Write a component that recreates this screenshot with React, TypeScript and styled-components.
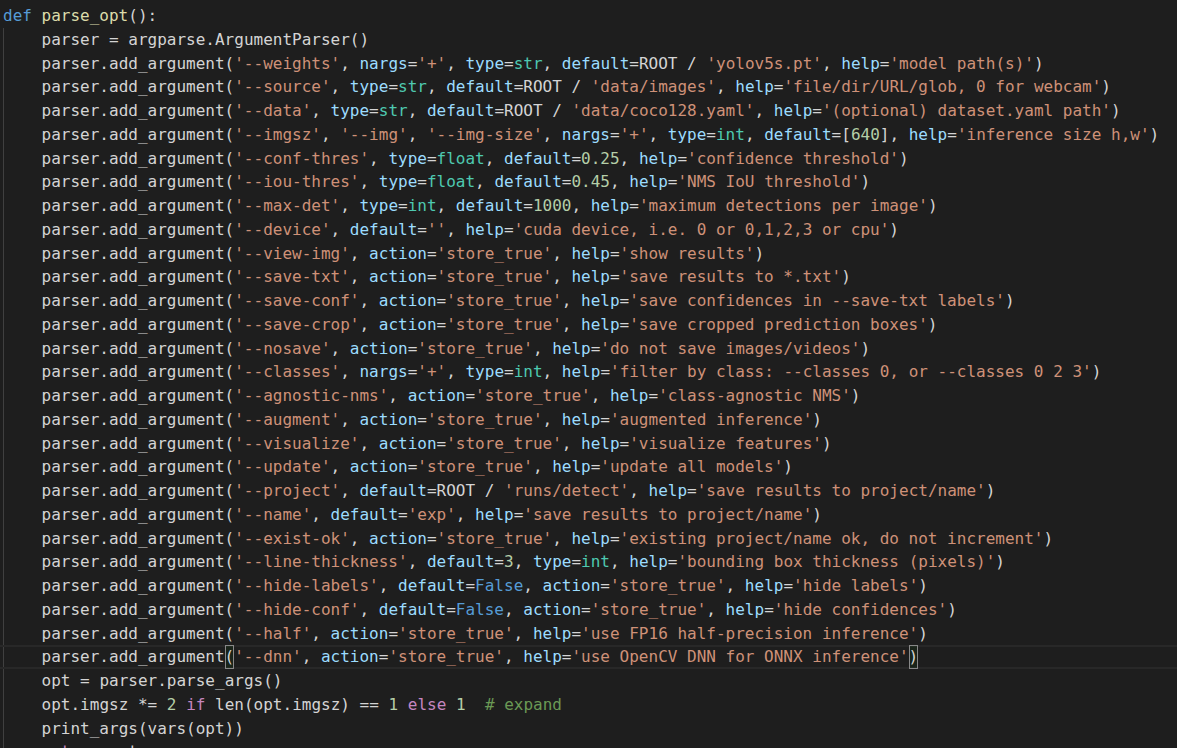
import React from "react";
import styled, { createGlobalStyle, css } from "styled-components";

const GlobalStyle = createGlobalStyle`
  html, body {
    margin: 0;
    padding: 0;
    background: #1e1e1e;
    overflow: hidden;
  }
`;

type Kind =
  | "plain"
  | "keyword"
  | "control"
  | "func"
  | "param"
  | "string"
  | "number"
  | "type"
  | "comment";

const colors: Record<Kind, string> = {
  plain: "#d4d4d4",
  keyword: "#569cd6",
  control: "#c586c0",
  func: "#dcdcaa",
  param: "#9cdcfe",
  string: "#ce9178",
  number: "#b5cea8",
  type: "#4ec9b0",
  comment: "#6a9955",
};

const Editor = styled.main`
  width: 1177px;
  height: 748px;
  overflow: hidden;
  background: #1e1e1e;
  padding-top: 4px;
  box-sizing: border-box;
  font-family: "DejaVu Sans Mono", "Liberation Mono", monospace;
  font-size: 16px;
  line-height: 23.75px;
  color: #d4d4d4;
`;

const Line = styled.div<{ $guide?: boolean; $active?: boolean }>`
  height: 23.75px;
  padding-left: 3px;
  white-space: pre;
  ${(p) =>
    p.$guide &&
    css`
      background: linear-gradient(#404040, #404040) 3px 0 / 1px 100% no-repeat;
    `}
  ${(p) =>
    p.$active &&
    css`
      box-shadow: inset 0 2px 0 #282828, inset 0 -2px 0 #282828;
    `}
`;

const Tok = styled.span<{ $kind: Kind }>`
  color: ${(p) => colors[p.$kind]};
`;

const BracketBox = styled.span`
  display: inline-block;
  height: 23.75px;
  vertical-align: top;
  box-shadow: inset 0 0 0 1px #888888;
  background: rgba(0, 100, 0, 0.1);
  color: #d4d4d4;
`;

const source = `def parse_opt():
    parser = argparse.ArgumentParser()
    parser.add_argument('--weights', nargs='+', type=str, default=ROOT / 'yolov5s.pt', help='model path(s)')
    parser.add_argument('--source', type=str, default=ROOT / 'data/images', help='file/dir/URL/glob, 0 for webcam')
    parser.add_argument('--data', type=str, default=ROOT / 'data/coco128.yaml', help='(optional) dataset.yaml path')
    parser.add_argument('--imgsz', '--img', '--img-size', nargs='+', type=int, default=[640], help='inference size h,w')
    parser.add_argument('--conf-thres', type=float, default=0.25, help='confidence threshold')
    parser.add_argument('--iou-thres', type=float, default=0.45, help='NMS IoU threshold')
    parser.add_argument('--max-det', type=int, default=1000, help='maximum detections per image')
    parser.add_argument('--device', default='', help='cuda device, i.e. 0 or 0,1,2,3 or cpu')
    parser.add_argument('--view-img', action='store_true', help='show results')
    parser.add_argument('--save-txt', action='store_true', help='save results to *.txt')
    parser.add_argument('--save-conf', action='store_true', help='save confidences in --save-txt labels')
    parser.add_argument('--save-crop', action='store_true', help='save cropped prediction boxes')
    parser.add_argument('--nosave', action='store_true', help='do not save images/videos')
    parser.add_argument('--classes', nargs='+', type=int, help='filter by class: --classes 0, or --classes 0 2 3')
    parser.add_argument('--agnostic-nms', action='store_true', help='class-agnostic NMS')
    parser.add_argument('--augment', action='store_true', help='augmented inference')
    parser.add_argument('--visualize', action='store_true', help='visualize features')
    parser.add_argument('--update', action='store_true', help='update all models')
    parser.add_argument('--project', default=ROOT / 'runs/detect', help='save results to project/name')
    parser.add_argument('--name', default='exp', help='save results to project/name')
    parser.add_argument('--exist-ok', action='store_true', help='existing project/name ok, do not increment')
    parser.add_argument('--line-thickness', default=3, type=int, help='bounding box thickness (pixels)')
    parser.add_argument('--hide-labels', default=False, action='store_true', help='hide labels')
    parser.add_argument('--hide-conf', default=False, action='store_true', help='hide confidences')
    parser.add_argument('--half', action='store_true', help='use FP16 half-precision inference')
    parser.add_argument('--dnn', action='store_true', help='use OpenCV DNN for ONNX inference')
    opt = parser.parse_args()
    opt.imgsz *= 2 if len(opt.imgsz) == 1 else 1  # expand
    print_args(vars(opt))
    return opt`;

const ACTIVE_LINE = 27;

type Token = { kind: Kind; text: string };

const KEYWORDS = new Set(["def", "False", "True", "None"]);
const CONTROL = new Set(["if", "else", "return", "for", "in"]);
const TYPES = new Set(["str", "int", "float"]);

function tokenize(line: string): Token[] {
  const out: Token[] = [];
  let i = 0;
  let depth = 0;
  let prevWord = "";
  while (i < line.length) {
    const ch = line[i];
    if (ch === "#") {
      out.push({ kind: "comment", text: line.slice(i) });
      break;
    }
    if (ch === "'") {
      const end = line.indexOf("'", i + 1);
      out.push({ kind: "string", text: line.slice(i, end + 1) });
      i = end + 1;
      continue;
    }
    if (/[0-9]/.test(ch)) {
      const m = /^[0-9]+(\.[0-9]+)?/.exec(line.slice(i))!;
      out.push({ kind: "number", text: m[0] });
      i += m[0].length;
      continue;
    }
    if (/[A-Za-z_]/.test(ch)) {
      const m = /^[A-Za-z_][A-Za-z0-9_]*/.exec(line.slice(i))!;
      const w = m[0];
      const rest = line.slice(i + w.length);
      let kind: Kind = "plain";
      if (prevWord === "def") kind = "func";
      else if (KEYWORDS.has(w)) kind = "keyword";
      else if (CONTROL.has(w)) kind = "control";
      else if (TYPES.has(w)) kind = "type";
      else if (depth > 0 && /^=(?!=)/.test(rest)) kind = "param";
      out.push({ kind, text: w });
      prevWord = w;
      i += w.length;
      continue;
    }
    if (ch === "(" || ch === "[") depth++;
    if (ch === ")" || ch === "]") depth--;
    out.push({ kind: "plain", text: ch });
    i++;
  }
  return out;
}

const CodeLine: React.FC<{ text: string; index: number }> = ({ text, index }) => {
  const tokens = tokenize(text);
  const active = index === ACTIVE_LINE;
  const open = active ? tokens.findIndex((t) => t.text === "(") : -1;
  let close = -1;
  if (active) {
    for (let k = tokens.length - 1; k >= 0; k--) {
      if (tokens[k].text === ")") {
        close = k;
        break;
      }
    }
  }
  return (
    <Line $guide={index > 0} $active={active}>
      {tokens.map((t, k) =>
        k === open || k === close ? (
          <BracketBox key={k}>{t.text}</BracketBox>
        ) : (
          <Tok key={k} $kind={t.kind}>
            {t.text}
          </Tok>
        )
      )}
    </Line>
  );
};

export default function App() {
  const lines = source.split("\n");
  return (
    <>
      <GlobalStyle />
      <Editor>
        {lines.map((l, i) => (
          <CodeLine key={i} text={l} index={i} />
        ))}
      </Editor>
    </>
  );
}
